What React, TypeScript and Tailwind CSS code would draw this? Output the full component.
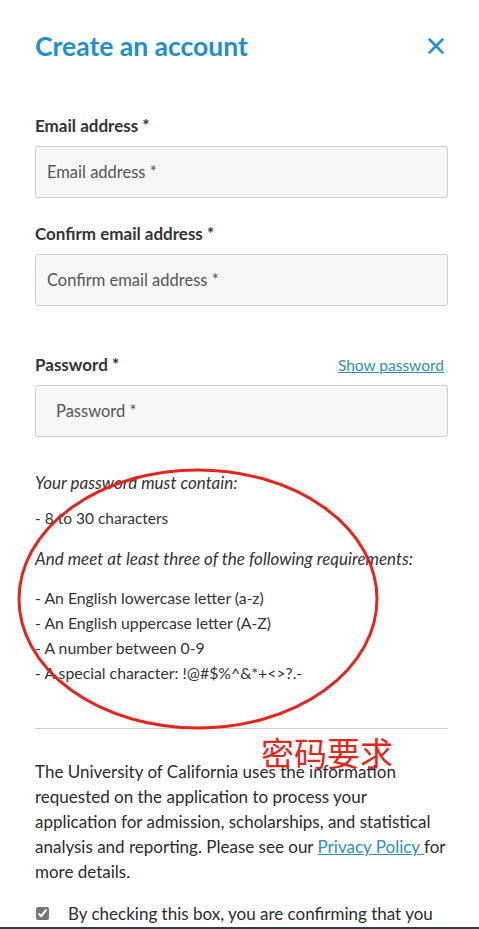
import { X } from 'lucide-react'

const reqs = [
  '- An English lowercase letter (a-z)',
  '- An English uppercase letter (A-Z)',
  '- A number between 0-9',
  '- A special character: !@#$%^&*+<>?.-',
]

function Field({ placeholder, indent = false }: { placeholder: string; indent?: boolean }) {
  return (
    <div
      className={`h-[52px] rounded-[3px] border border-[#cfcfcf] bg-[#f7f7f7] flex items-center text-[16.5px] text-[#555] ${
        indent ? 'pl-[20px]' : 'pl-[11px]'
      }`}
    >
      {placeholder}
    </div>
  )
}

export default function App() {
  return (
    <div
      className="relative w-[479px] h-[929px] overflow-hidden bg-white text-[#333]"
      style={{ fontFamily: 'Lato, "Noto Sans", sans-serif' }}
    >
      <div className="pl-[35px] pr-[31px] pt-[29px]">
        {/* Header */}
        <div className="flex items-center justify-between">
          <h1 className="text-[26.5px] leading-[34px] font-bold text-[#1e8fcc]">Create an account</h1>
          <X className="w-[26px] h-[26px] text-[#2a90cc] mr-[-1px]" strokeWidth={2.5} />
        </div>

        {/* Email */}
        <label className="block mt-[51px] text-[17px] leading-[24px] font-bold">Email address *</label>
        <div className="mt-[8px]">
          <Field placeholder="Email address *" />
        </div>

        <label className="block mt-[24px] text-[17px] leading-[24px] font-bold">Confirm email address *</label>
        <div className="mt-[8px]">
          <Field placeholder="Confirm email address *" />
        </div>

        {/* Password */}
        <div className="mt-[47px] flex items-center justify-between">
          <label className="text-[17px] leading-[24px] font-bold">Password *</label>
          <a className="text-[15.5px] leading-[24px] text-[#2a8fbd] underline mr-[4px]">Show password</a>
        </div>
        <div className="mt-[8px]">
          <Field placeholder="Password *" indent />
        </div>

        {/* Requirements */}
        <p className="mt-[34px] text-[17px] leading-[24px] italic">Your password must contain:</p>
        <p className="mt-[11px] text-[15.5px] leading-[24px]">- 8 to 30 characters</p>
        <p className="mt-[17px] text-[17px] leading-[24px] italic">And meet at least three of the following requirements:</p>
        <ul className="mt-[14px] text-[15.8px] leading-[25px]">
          {reqs.map((r) => (
            <li key={r}>{r}</li>
          ))}
        </ul>

        <hr className="mt-[43px] border-t border-[#cfcfcf]" />

        <p className="mt-[30px] text-[17px] leading-[25px] text-[#2b2b2b]">
          The University of California uses the information requested on the application to process your
          application for admission, scholarships, and statistical analysis and reporting. Please see our{' '}
          <a className="text-[#2a8fbd] underline">Privacy Policy </a>for more details.
        </p>

        <div className="mt-[17px] flex items-center gap-[19px]">
          <input type="checkbox" defaultChecked className="w-[13px] h-[13px] ml-[1px] accent-[#777]" />
          <span className="text-[17px] leading-[25px] text-[#2b2b2b]">
            By checking this box, you are confirming that you
          </span>
        </div>
      </div>

      {/* Annotation overlay */}
      <svg className="absolute left-0 top-0 pointer-events-none" width="479" height="929">
        <ellipse cx="198" cy="599" rx="179" ry="129" fill="none" stroke="#e3261c" strokeWidth="3" />
      </svg>
      <div
        className="absolute left-[261px] top-[731px] text-[33px] leading-[42px] text-[#e3261c]"
        style={{ fontFamily: '"Noto Sans CJK SC", sans-serif' }}
      >
        密码要求
      </div>
      <div className="absolute left-0 right-0 bottom-0 h-[2px] bg-[#2e3d4c]" />
    </div>
  )
}
